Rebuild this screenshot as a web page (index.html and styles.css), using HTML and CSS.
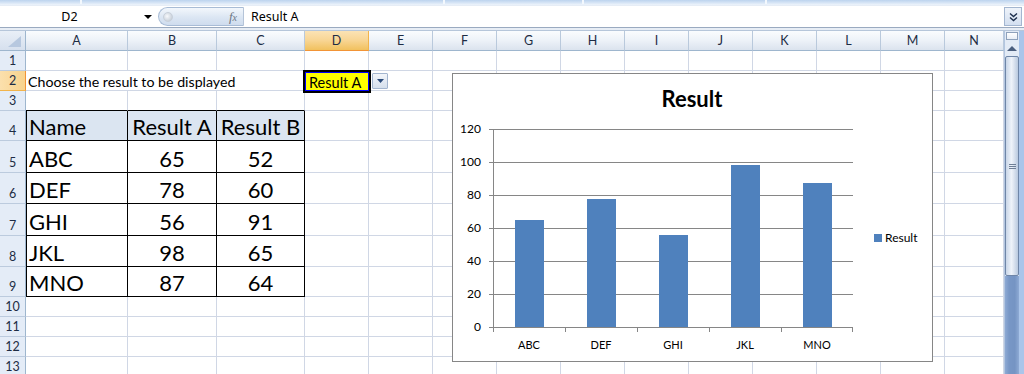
FILE: index.html
```html
<!DOCTYPE html>
<html>
<head>
<meta charset="utf-8">
<link rel="stylesheet" href="styles.css">
</head>
<body>
<div class="app">
  <div class="ribbon-edge">
    <span class="sep s1"></span><span class="sep s2"></span><span class="sep s3"></span><span class="sep s4"></span>
  </div>
  <div class="fbar">
    <div class="namebox"><span class="nb-text">D2</span><span class="nb-arrow"></span></div>
    <div class="fx-zone"><span class="knob"></span><span class="fx">f<span class="fx-x">x</span></span></div>
    <div class="formula">Result A</div>
    <div class="expand">
      <svg width="9" height="10" viewBox="0 0 9 10"><path d="M1 1.5 L4.5 4.5 L8 1.5 M1 5.5 L4.5 8.5 L8 5.5" fill="none" stroke="#1d2f4d" stroke-width="1.4"/></svg>
    </div>
  </div>
  <div class="fbar-gap"></div>
  <div class="main">
    <div class="sheet">
      <div class="row hdr">
        <div class="corner"><svg width="25" height="19" viewBox="0 0 25 19"><polygon points="21,5 21,16 8,16" fill="#b7c8df"/></svg></div>
        <div class="ch">A</div><div class="ch">B</div><div class="ch">C</div><div class="ch on">D</div><div class="ch">E</div><div class="ch">F</div><div class="ch">G</div><div class="ch">H</div><div class="ch">I</div><div class="ch">J</div><div class="ch">K</div><div class="ch">L</div><div class="ch">M</div><div class="ch">N</div>
      </div>
      <div class="row r20">
        <div class="rh">1</div><div class="c"></div><div class="c"></div><div class="c tb"></div><div class="c"></div><div class="c"></div><div class="c"></div><div class="c"></div><div class="c"></div><div class="c"></div><div class="c"></div><div class="c"></div><div class="c"></div><div class="c"></div><div class="c"></div>
      </div>
      <div class="row r20">
        <div class="rh on">2</div><div class="c span3 txt">Choose the result to be displayed</div><div class="c"></div><div class="c"></div><div class="c"></div><div class="c"></div><div class="c"></div><div class="c"></div><div class="c"></div><div class="c"></div><div class="c"></div><div class="c"></div><div class="c"></div>
      </div>
      <div class="row r20">
        <div class="rh">3</div><div class="c bb"></div><div class="c bb"></div><div class="c bb"></div><div class="c"></div><div class="c"></div><div class="c"></div><div class="c"></div><div class="c"></div><div class="c"></div><div class="c"></div><div class="c"></div><div class="c"></div><div class="c"></div><div class="c"></div>
      </div>
      <div class="row r30">
        <div class="rh">4</div><div class="c t th first">Name</div><div class="c t th num">Result A</div><div class="c t th num">Result B</div><div class="c"></div><div class="c"></div><div class="c"></div><div class="c"></div><div class="c"></div><div class="c"></div><div class="c"></div><div class="c"></div><div class="c"></div><div class="c"></div><div class="c"></div>
      </div>
      <div class="row r32">
        <div class="rh">5</div><div class="c t first">ABC</div><div class="c t num">65</div><div class="c t num">52</div><div class="c"></div><div class="c"></div><div class="c"></div><div class="c"></div><div class="c"></div><div class="c"></div><div class="c"></div><div class="c"></div><div class="c"></div><div class="c"></div><div class="c"></div>
      </div>
      <div class="row r31">
        <div class="rh">6</div><div class="c t first">DEF</div><div class="c t num">78</div><div class="c t num">60</div><div class="c"></div><div class="c"></div><div class="c"></div><div class="c"></div><div class="c"></div><div class="c"></div><div class="c"></div><div class="c"></div><div class="c"></div><div class="c"></div><div class="c"></div>
      </div>
      <div class="row r32">
        <div class="rh">7</div><div class="c t first">GHI</div><div class="c t num">56</div><div class="c t num">91</div><div class="c"></div><div class="c"></div><div class="c"></div><div class="c"></div><div class="c"></div><div class="c"></div><div class="c"></div><div class="c"></div><div class="c"></div><div class="c"></div><div class="c"></div>
      </div>
      <div class="row r31">
        <div class="rh">8</div><div class="c t first">JKL</div><div class="c t num">98</div><div class="c t num">65</div><div class="c"></div><div class="c"></div><div class="c"></div><div class="c"></div><div class="c"></div><div class="c"></div><div class="c"></div><div class="c"></div><div class="c"></div><div class="c"></div><div class="c"></div>
      </div>
      <div class="row r30">
        <div class="rh">9</div><div class="c t first">MNO</div><div class="c t num">87</div><div class="c t num">64</div><div class="c"></div><div class="c"></div><div class="c"></div><div class="c"></div><div class="c"></div><div class="c"></div><div class="c"></div><div class="c"></div><div class="c"></div><div class="c"></div><div class="c"></div>
      </div>
      <div class="row r20">
        <div class="rh">10</div><div class="c"></div><div class="c"></div><div class="c"></div><div class="c"></div><div class="c"></div><div class="c"></div><div class="c"></div><div class="c"></div><div class="c"></div><div class="c"></div><div class="c"></div><div class="c"></div><div class="c"></div><div class="c"></div>
      </div>
      <div class="row r20">
        <div class="rh">11</div><div class="c"></div><div class="c"></div><div class="c"></div><div class="c"></div><div class="c"></div><div class="c"></div><div class="c"></div><div class="c"></div><div class="c"></div><div class="c"></div><div class="c"></div><div class="c"></div><div class="c"></div><div class="c"></div>
      </div>
      <div class="row r20">
        <div class="rh">12</div><div class="c"></div><div class="c"></div><div class="c"></div><div class="c"></div><div class="c"></div><div class="c"></div><div class="c"></div><div class="c"></div><div class="c"></div><div class="c"></div><div class="c"></div><div class="c"></div><div class="c"></div><div class="c"></div>
      </div>
      <div class="row r20">
        <div class="rh">13</div><div class="c"></div><div class="c"></div><div class="c"></div><div class="c"></div><div class="c"></div><div class="c"></div><div class="c"></div><div class="c"></div><div class="c"></div><div class="c"></div><div class="c"></div><div class="c"></div><div class="c"></div><div class="c"></div>
      </div>

      <div class="combo">
        <div class="combo-field">Result A</div>
        <div class="combo-btn"><svg width="7" height="4" viewBox="0 0 7 4"><polygon points="0,0 7,0 3.5,4" fill="#2a4a7a"/></svg></div>
      </div>

      <div class="chart">
        <svg width="480" height="288" viewBox="0 0 480 288">
          <text x="240" y="34" class="title" text-anchor="middle">Result</text>
          <g stroke="#868686" stroke-width="1">
            <line x1="37" y1="56.5" x2="401" y2="56.5"/>
            <line x1="37" y1="89.5" x2="401" y2="89.5"/>
            <line x1="37" y1="122.5" x2="401" y2="122.5"/>
            <line x1="37" y1="155.5" x2="401" y2="155.5"/>
            <line x1="37" y1="188.5" x2="401" y2="188.5"/>
            <line x1="37" y1="221.5" x2="401" y2="221.5"/>
            <line x1="37" y1="254.5" x2="401" y2="254.5"/>
            <line x1="41.5" y1="56" x2="41.5" y2="259"/>
            <line x1="113.5" y1="254" x2="113.5" y2="259"/>
            <line x1="185.5" y1="254" x2="185.5" y2="259"/>
            <line x1="257.5" y1="254" x2="257.5" y2="259"/>
            <line x1="329.5" y1="254" x2="329.5" y2="259"/>
            <line x1="400.5" y1="254" x2="400.5" y2="259"/>
          </g>
          <g fill="#4f81bd">
            <rect x="63" y="147" width="29" height="107"/>
            <rect x="135" y="126" width="29" height="128"/>
            <rect x="207" y="162" width="29" height="92"/>
            <rect x="279" y="92" width="29" height="162"/>
            <rect x="351" y="110" width="29" height="144"/>
          </g>
          <g class="ax ay" text-anchor="end">
            <text x="29" y="60">120</text>
            <text x="29" y="93">100</text>
            <text x="29" y="126">80</text>
            <text x="29" y="159">60</text>
            <text x="29" y="192">40</text>
            <text x="29" y="225">20</text>
            <text x="29" y="258">0</text>
          </g>
          <g class="ax" text-anchor="middle">
            <text x="77" y="276">ABC</text>
            <text x="149" y="276">DEF</text>
            <text x="221" y="276">GHI</text>
            <text x="293" y="276">JKL</text>
            <text x="365" y="276">MNO</text>
          </g>
          <rect x="422" y="161" width="8" height="8" fill="#4f81bd"/>
          <text x="433" y="169" class="ax lg">Result</text>
        </svg>
      </div>
    </div>
    <div class="vscroll">
      <div class="vs-bar">
        <div class="split"></div>
        <div class="up"><svg width="10" height="5" viewBox="0 0 10 5"><polygon points="0,5 10,5 5,0" fill="#4b5f7e"/></svg></div>
        <div class="thumb"><span class="grip"></span></div>
        <div class="track"></div>
      </div>
      <div class="vs-edge"></div>
    </div>
  </div>
</div>
</body>
</html>
```
FILE: styles.css
```css
* { box-sizing: border-box; margin: 0; padding: 0; }
html, body { width: 1024px; height: 374px; overflow: hidden; background: #fff; }
body { font-family: "Lato", "Liberation Sans", sans-serif; color: #000; }

.app { width: 1024px; height: 374px; overflow: hidden; display: flex; flex-direction: column; }

.ribbon-edge { height: 6px; position: relative; background: linear-gradient(#bcd3ee, #d4e3f5 50%, #eef4fb); border-bottom: 1px solid #e6edf6; flex: none; }
.sep { position: absolute; top: 0; width: 2px; height: 4px; background: #f3f8fd; }
.s1 { left: 80px; } .s2 { left: 443px; } .s3 { left: 582px; } .s4 { left: 765px; }

.fbar { height: 22px; flex: none; display: flex; background: #fff; border-bottom: 1px solid #9aaac0; }
.namebox { width: 158px; display: flex; align-items: center; font-family: "Noto Sans", "Open Sans", sans-serif; font-size: 12.5px; color: #000; }
.nb-text { flex: 1; text-align: center; padding-left: 0; padding-right: 5px; }
.nb-arrow { width: 0; height: 0; border-left: 4px solid transparent; border-right: 4px solid transparent; border-top: 4px solid #000; margin-right: 6px; }
.fx-zone { width: 86px; margin: 1px 0; border: 1px solid #a8bcd6; border-right: 1px solid #b5c4d8; border-radius: 11px 0 0 11px; background: linear-gradient(#f3f7fc, #dbe6f3 55%, #cfdcee); display: flex; align-items: center; justify-content: space-between; padding: 0 6px 0 4px; }
.knob { width: 10px; height: 10px; border-radius: 50%; background: radial-gradient(circle at 40% 40%, #f7f9fc, #b9c3cf); border: 1px solid #c8d0da; }
.fx { font-family: "Liberation Serif", serif; font-style: italic; font-size: 13px; color: #6d7683; }
.fx-x { font-size: 10px; }
.formula { flex: 1; display: flex; align-items: center; padding-left: 7px; font-family: "Noto Sans", "Open Sans", sans-serif; font-size: 12.5px; }
.expand { width: 18px; margin: 1px 2px 0 0; height: 19px; border: 1px solid #a3b6d0; background: linear-gradient(#eef3fa, #d3dff0); display: flex; align-items: center; justify-content: center; }

.fbar-gap { height: 3px; flex: none; background: #e7edf5; border-bottom: 1px solid #b6c6da; }

.main { flex: 1; display: flex; min-height: 0; }
.sheet { width: 1004px; position: relative; overflow: hidden; }

.row { display: grid; grid-template-columns: 26px 102px 89px 88px 64px 64px 64px 64px 64px 64px 64px 64px 64px 64px 59px; }
.hdr { height: 20px; }
.r20 { height: 20px; } .r30 { height: 30px; } .r31 { height: 31px; } .r32 { height: 32px; }

.corner { background: linear-gradient(#e9eff7, #d6e0ee); border-right: 1px solid #9eb6ce; border-bottom: 1px solid #9eb6ce; }
.corner svg { display: block; }
.ch { display: flex; align-items: center; justify-content: center; font-size: 12.5px; color: #1d2c44; background: linear-gradient(#fafcfe, #edf2f8 50%, #dbe3ee); border-right: 1px solid #b9c9dc; border-bottom: 1px solid #9eb6ce; }
.ch.on { background: linear-gradient(#fbe3b5, #f8d593 50%, #f1c15e); border-right-color: #f2b44b; border-bottom-color: #f29436; }

.rh { display: flex; align-items: flex-end; justify-content: center; padding-bottom: 2px; font-size: 12.5px; color: #1d2c44; background: #e4ecf7; border-right: 1px solid #9eb6ce; border-bottom: 1px solid #bccbde; }
.rh.on { background: linear-gradient(90deg, #fbe0ad, #f8d38d); border-right-color: #f29436; border-bottom-color: #f2b44b; }

.c { border-right: 1px solid #d0d7e5; border-bottom: 1px solid #d0d7e5; }
.span3 { grid-column: span 3; border-right: 1px solid #d0d7e5; }
.txt { font-size: 14.2px; display: flex; align-items: flex-end; padding: 0 0 0 2px; line-height: 17px; white-space: nowrap; }
.bb { border-bottom-color: #000; }

.t { border-right-color: #000; border-bottom-color: #000; display: flex; align-items: flex-end; font-size: 22px; line-height: 22px; padding-bottom: 2px; white-space: nowrap; }
.t.first { box-shadow: inset 1px 0 0 #000; padding-left: 3px; }
.t.num { justify-content: center; }
.th { background: #dbe5f1; }

.combo { position: absolute; left: 303px; top: 39px; display: flex; align-items: flex-start; }
.combo-field { width: 68px; height: 23px; border: 2px solid #000; background: #ffff00; box-shadow: inset 0 0 0 1px #0000ff; font-size: 14.5px; line-height: 17px; padding: 2px 0 0 4px; }
.combo-btn { width: 16px; height: 16px; margin: 3px 0 0 1px; border: 1px solid #a3b5cf; border-radius: 1px; background: linear-gradient(#f2f5fa, #d5dfec); display: flex; align-items: center; justify-content: center; }
.combo-btn svg { display: block; }

.chart { position: absolute; left: 452px; top: 42px; width: 481px; height: 289px; border: 1px solid #868686; background: #fff; }
.chart svg { display: block; margin: -1px 0 0 -1px; font-family: "Lato", "Liberation Sans", sans-serif; }
.title { font-size: 22px; font-weight: 700; fill: #000; }
.ax { font-size: 11px; fill: #000; }
.ay { font-size: 12px; }
.lg { font-size: 12px; }

.vscroll { width: 20px; display: flex; }
.vs-bar { width: 15px; display: flex; flex-direction: column; background: #e3ebf6; border-left: 1px solid #b3c6e0; }
.split { height: 8px; margin: 1px 1px 0; border: 1px solid #8ea1bb; background: linear-gradient(#fff, #e8eef6); }
.up { height: 16px; display: flex; align-items: center; justify-content: center; }
.up svg { display: block; }
.thumb { height: 220px; border: 1px solid #6f86a8; border-radius: 2px; background: linear-gradient(90deg, #c9d6e8, #eef3fa 45%, #e2e9f3 60%, #b9c9df); display: flex; align-items: center; justify-content: center; }
.grip { width: 7px; height: 5px; border-top: 1px solid #6f7f96; border-bottom: 1px solid #6f7f96; background: linear-gradient(transparent 1px, #6f7f96 1px, #6f7f96 2px, transparent 2px); }
.track { flex: 1; background: linear-gradient(90deg, #8eaad4, #7897c6 30%, #7594c3 70%, #8eaad4); }
.vs-edge { flex: 1; background: #aac5ea; }
```
